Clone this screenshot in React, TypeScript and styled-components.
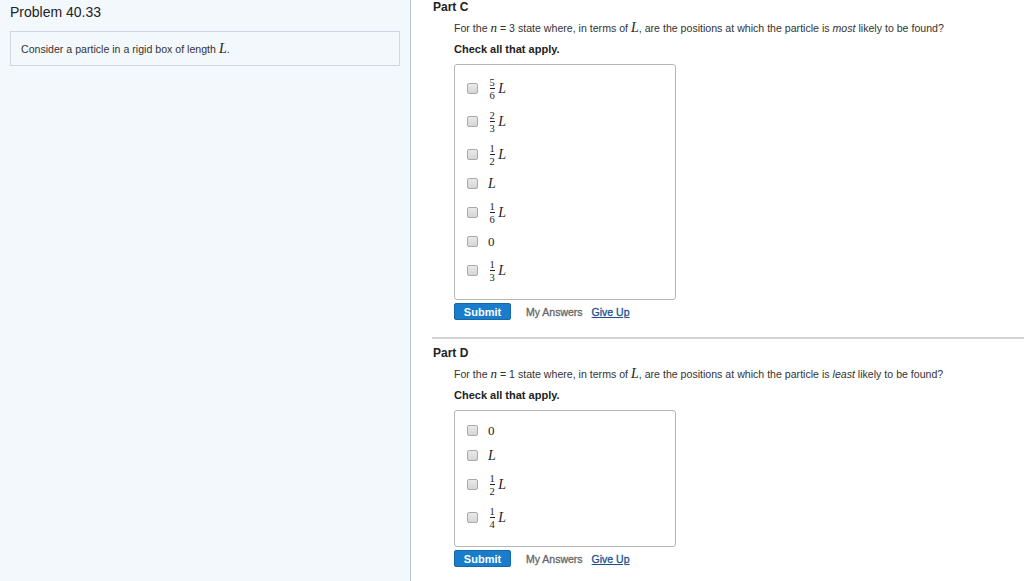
import React from "react";
import styled, { createGlobalStyle } from "styled-components";

const GlobalStyle = createGlobalStyle`
  html, body {
    margin: 0;
    padding: 0;
    background: #fff;
    font-family: "Liberation Sans", Arial, sans-serif;
    color: #333;
  }
`;

type Opt = { num?: string; den?: string; text?: string; L?: boolean };

const partC: Opt[] = [
  { num: "5", den: "6", L: true },
  { num: "2", den: "3", L: true },
  { num: "1", den: "2", L: true },
  { L: true },
  { num: "1", den: "6", L: true },
  { text: "0" },
  { num: "1", den: "3", L: true },
];

const partD: Opt[] = [
  { text: "0" },
  { L: true },
  { num: "1", den: "2", L: true },
  { num: "1", den: "4", L: true },
];

const Option = ({ o }: { o: Opt }) => (
  <Row tall={!!o.num}>
    <Check />
    <MathLabel>
      {o.num && (
        <Frac>
          <span>{o.num}</span>
          <Den>{o.den}</Den>
        </Frac>
      )}
      {o.text && <Num>{o.text}</Num>}
      {o.L && <Var size={14}>L</Var>}
    </MathLabel>
  </Row>
);

const Part = ({
  title,
  n,
  word,
  options,
  divided,
}: {
  title: string;
  n: string;
  word: string;
  options: Opt[];
  divided?: boolean;
}) => (
  <PartWrap divided={divided}>
    <PartTitle>{title}</PartTitle>
    <Body>
      <Question>
        For the <Var size={13}>n</Var> = {n} state where, in terms of <Var size={14}>L</Var>, are the positions at which the particle is <em>{word}</em> likely to be found?
      </Question>
      <Instr>Check all that apply.</Instr>
      <OptionBox>
        {options.map((o, i) => (
          <Option key={i} o={o} />
        ))}
      </OptionBox>
      <Actions>
        <SubmitBtn>Submit</SubmitBtn>
        <MyAnswers>My Answers</MyAnswers>
        <GiveUp>Give Up</GiveUp>
      </Actions>
    </Body>
  </PartWrap>
);

export default function App() {
  return (
    <>
      <GlobalStyle />
      <Page>
        <Sidebar>
          <ProblemTitle>Problem 40.33</ProblemTitle>
          <Intro>
            Consider a particle in a rigid box of length <Var size={14}>L</Var>.
          </Intro>
        </Sidebar>
        <Main>
          <Part title="Part C" n="3" word="most" options={partC} />
          <Part title="Part D" n="1" word="least" options={partD} divided />
        </Main>
      </Page>
    </>
  );
}

const Page = styled.div`
  display: flex;
  width: 1024px;
  height: 581px;
  overflow: hidden;
`;

const Sidebar = styled.div`
  width: 411px;
  flex-shrink: 0;
  background: #f3f8fd;
  border-right: 1px solid #b9c5d1;
  padding: 4px 10px 0 10px;
  box-sizing: border-box;
`;

const ProblemTitle = styled.div`
  font-size: 14px;
  line-height: 16px;
  color: #222;
`;

const Intro = styled.div`
  margin-top: 11px;
  border: 1px solid #cdd8e4;
  height: 35px;
  box-sizing: border-box;
  padding: 0 10px;
  display: flex;
  align-items: center;
  font-size: 10.6px;
  color: #333;
  white-space: pre;
`;

const Main = styled.div`
  flex: 1;
  padding-left: 22px;
`;

const PartWrap = styled.div<{ divided?: boolean }>`
  border-top: ${(p) => (p.divided ? "2px solid #d3d3d3" : "none")};
  margin-top: ${(p) => (p.divided ? "17px" : "0")};
  padding-top: ${(p) => (p.divided ? "7px" : "0")};
  margin-left: ${(p) => (p.divided ? "-1px" : "0")};
  padding-left: ${(p) => (p.divided ? "1px" : "0")};
`;

const PartTitle = styled.div`
  font-size: 12px;
  font-weight: bold;
  line-height: 14px;
  color: #222;
`;

const Body = styled.div`
  padding-left: 21px;
`;

const Question = styled.div`
  margin-top: 7px;
  font-size: 10.6px;
  line-height: 14px;
  color: #333;
  em {
    font-style: italic;
  }
`;

const Instr = styled.div`
  margin-top: 7px;
  font-size: 11px;
  line-height: 14px;
  font-weight: bold;
  color: #222;
`;

const OptionBox = styled.div`
  margin-top: 8px;
  width: 222px;
  box-sizing: border-box;
  border: 1px solid #b5b5b5;
  border-radius: 3px;
  padding: 7px 0 12px 12px;
`;

const Row = styled.div<{ tall: boolean }>`
  display: flex;
  align-items: center;
  height: ${(p) => (p.tall ? "33px" : "25px")};
`;

const Check = styled.span`
  width: 9px;
  height: 9px;
  border: 1px solid #a9a9a9;
  border-radius: 2px;
  background: linear-gradient(#e9e9e9, #d6d6d6);
  margin-right: 10px;
  flex-shrink: 0;
`;

const MathLabel = styled.span`
  display: inline-flex;
  align-items: center;
  font-family: "DejaVu Serif", "Liberation Serif", serif;
  color: #222;
`;

const Frac = styled.span`
  display: inline-flex;
  flex-direction: column;
  align-items: center;
  font-family: "Liberation Serif", serif;
  font-size: 10.5px;
  line-height: 11px;
  margin-right: 2px;
  padding: 0 1.5px;
`;

const Den = styled.span`
  border-top: 1px solid #222;
  padding-top: 1px;
  align-self: stretch;
  text-align: center;
`;

const Num = styled.span`
  font-family: "Liberation Serif", serif;
  font-size: 13px;
`;

const Var = styled.span<{ size: number }>`
  font-family: "Liberation Serif", "DejaVu Serif", serif;
  font-style: italic;
  font-size: ${(p) => p.size}px;
  line-height: 1;
  color: #222;
`;

const Actions = styled.div`
  margin-top: 3px;
  display: flex;
  align-items: center;
  font-size: 10.5px;
`;

const SubmitBtn = styled.button`
  width: 57px;
  height: 17px;
  padding: 0;
  border: 1px solid #1766a8;
  border-radius: 2px;
  background: #1a7dcc;
  color: #fff;
  font-family: "Liberation Sans", Arial, sans-serif;
  font-size: 11px;
  font-weight: bold;
`;

const MyAnswers = styled.span`
  margin-left: 15px;
  color: #666;
  -webkit-text-stroke: 0.3px #666;
`;

const GiveUp = styled.span`
  margin-left: 9px;
  color: #1d4f8f;
  -webkit-text-stroke: 0.3px #1d4f8f;
  text-decoration: underline;
`;
